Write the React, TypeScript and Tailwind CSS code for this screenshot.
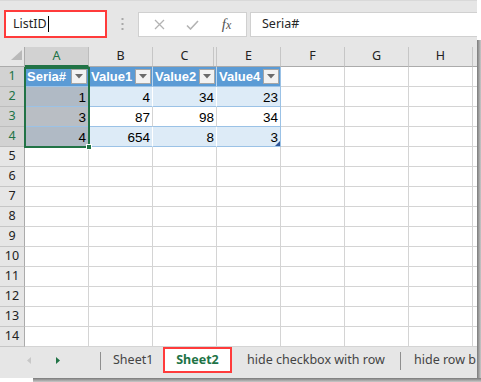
import React from "react";

const COLS = ["A", "B", "C", "E", "F", "G", "H"];

const TABLE: string[][] = [
  ["Seria#", "Value1", "Value2", "Value4"],
  ["1", "4", "34", "23"],
  ["3", "87", "98", "34"],
  ["4", "654", "8", "3"],
];

function DropButton() {
  return (
    <span className="ml-auto mr-px flex h-[15px] w-[16px] shrink-0 items-center justify-center border border-[#a6a6a6] bg-[#f2f2f2]">
      <svg width="8" height="5" viewBox="0 0 8 5">
        <path d="M0 0h8L4 4.5z" fill="#6b6b6b" />
      </svg>
    </span>
  );
}

function TableCell({ row, col }: { row: number; col: number }) {
  const value = TABLE[row][col];
  const last = col === 3;
  if (row === 0) {
    return (
      <div
        className={`flex h-5 w-16 shrink-0 items-center border-b border-[#9bc2e6] bg-[#5b9bd5] pl-[2px] font-['Liberation_Sans',sans-serif] text-[13px] font-bold text-white ${
          last ? "border-r border-r-[#9bc2e6]" : "border-r border-r-white/60"
        }`}
      >
        <span className="leading-none">{value}</span>
        <DropButton />
      </div>
    );
  }
  const selected = col === 0;
  const banded = row % 2 === 1;
  const bg = selected
    ? banded
      ? "bg-[#b0bac5]"
      : "bg-[#b9bec4]"
    : banded
      ? "bg-[#ddebf7]"
      : "bg-white";
  return (
    <div
      className={`relative flex h-5 w-16 shrink-0 items-end justify-end border-b border-[#9bc2e6] pb-[2px] pr-[2px] font-['Liberation_Sans',sans-serif] text-[13.5px] leading-none text-black ${bg} ${
        last ? "border-r border-r-[#9bc2e6]" : banded ? "border-r border-r-white" : "border-r border-r-[#d4d4d4]"
      }`}
    >
      {value}
      {last && row === 3 && (
        <svg className="absolute bottom-0 right-0" width="5" height="5" viewBox="0 0 5 5">
          <path d="M5 0V5H0z" fill="#2f5597" />
        </svg>
      )}
    </div>
  );
}

function RowHeader({ n }: { n: number }) {
  const sel = n <= 4;
  return (
    <div
      className={`flex h-5 w-[25px] shrink-0 items-center justify-center border-b border-r text-[12.5px] ${
        sel
          ? "border-b-[#bdbdbd] border-r-[#217346] bg-[#d2d2d2] text-[#217346]"
          : "border-b-[#c6c6c6] border-r-[#ababab] bg-[#e6e6e6] text-[#222]"
      }`}
    >
      {n}
    </div>
  );
}

function GridRow({ n }: { n: number }) {
  const inTable = n <= 4;
  return (
    <div className="flex">
      <RowHeader n={n} />
      {COLS.map((c, i) =>
        inTable && i < 4 ? (
          <TableCell key={c} row={n - 1} col={i} />
        ) : (
          <div key={c} className="h-5 w-16 shrink-0 border-b border-r border-[#d4d4d4] bg-white" />
        ),
      )}
      <div className="h-5 flex-1 border-b border-[#d4d4d4] bg-white" />
    </div>
  );
}

function ColumnHeaders() {
  return (
    <div className="flex h-5">
      <div className="flex w-[25px] shrink-0 items-end justify-end border-b border-r border-[#ababab] bg-[#e6e6e6] pb-[6px] pr-[2px]">
        <svg width="11" height="10" viewBox="0 0 11 10">
          <path d="M11 0V10H0z" fill="#b9b9b9" />
        </svg>
      </div>
      {COLS.map((c) => (
        <div
          key={c}
          className={`relative flex w-16 shrink-0 items-center justify-center border-r text-[12.5px] ${
            c === "A"
              ? "border-b-2 border-b-[#217346] border-r-[#bdbdbd] bg-[#d2d2d2] text-[#217346]"
              : "border-b border-b-[#ababab] border-r-[#c6c6c6] bg-[#e6e6e6] text-[#222]"
          }`}
        >
          {c}
          {c === "C" && <span className="absolute right-[2px] top-0 h-full w-px bg-[#c6c6c6]" />}
        </div>
      ))}
      <div className="flex-1 border-b border-[#ababab] bg-[#e6e6e6]" />
    </div>
  );
}

function FormulaBar() {
  return (
    <div className="flex h-[47px] items-start border-t border-[#d9d9d9] bg-[#e6e6e6] pl-[4px] pt-[9px]">
      <div className="flex h-[28px] w-[103px] shrink-0 items-center border-2 border-[#ff3b3b] bg-white pl-[7px] text-[12.5px] text-[#262626]">
        ListID
        <span className="ml-px h-[16px] w-px bg-black" />
      </div>
      <div className="flex h-[28px] w-[31px] shrink-0 items-center justify-center">
        <svg width="3" height="12" viewBox="0 0 3 12">
          <rect x="0.5" y="0" width="2" height="2" fill="#a8a8a8" />
          <rect x="0.5" y="5" width="2" height="2" fill="#a8a8a8" />
          <rect x="0.5" y="10" width="2" height="2" fill="#a8a8a8" />
        </svg>
      </div>
      <div className="mt-[2px] flex h-[25px] w-[109px] shrink-0 items-center border border-[#d0d0d0] bg-white">
        <span className="flex w-[36px] justify-center pl-[4px]">
          <svg width="11" height="11" viewBox="0 0 11 11">
            <path d="M1 1L10 10M10 1L1 10" stroke="#b3b3b3" strokeWidth="1.3" />
          </svg>
        </span>
        <span className="flex w-[34px] justify-center">
          <svg width="13" height="10" viewBox="0 0 13 10">
            <path d="M1 5.5L4.5 9L12 1" stroke="#b3b3b3" strokeWidth="1.6" fill="none" />
          </svg>
        </span>
        <span className="flex flex-1 justify-center pr-[2px]">
          <span className="font-['Liberation_Serif',serif] text-[15px] italic leading-none text-[#555]">
            f<span className="text-[12px]">x</span>
          </span>
        </span>
      </div>
      <div className="ml-[3px] mt-[2px] flex h-[25px] flex-1 items-center border border-r-0 border-[#d0d0d0] bg-white pl-[11px] text-[12.5px] text-[#262626]">
        Seria#
      </div>
    </div>
  );
}

function SheetTabs() {
  return (
    <div className="flex h-[31px] items-start bg-[#e6e6e6] text-[12.5px] text-[#444]">
      <div className="flex h-[26px] w-[100px] shrink-0 items-center">
        <svg className="ml-[27px]" width="4" height="7" viewBox="0 0 4 7">
          <path d="M4 0V7L0 3.5z" fill="#c8c8c8" />
        </svg>
        <svg className="ml-[25px]" width="4" height="7" viewBox="0 0 4 7">
          <path d="M0 0V7L4 3.5z" fill="#217346" />
        </svg>
      </div>
      <span className="mt-[5px] h-[18px] w-px bg-[#8f8f8f]" />
      <div className="flex h-[26px] w-[62px] shrink-0 items-center pl-[12px]">Sheet1</div>
      <div className="flex h-[26px] w-[69px] shrink-0 items-center justify-center border-2 border-[#ff3b3b] bg-white font-bold text-[#217346]">
        Sheet2
      </div>
      <div className="flex h-[26px] w-[168px] shrink-0 items-center pl-[15px]">hide checkbox with row</div>
      <span className="mt-[5px] h-[18px] w-px shrink-0 bg-[#8f8f8f]" />
      <div className="flex h-[26px] min-w-0 flex-1 items-center overflow-hidden whitespace-nowrap pl-[13px]">hide row b</div>
    </div>
  );
}

export default function App() {
  return (
    <div className="h-[382px] w-[481px] overflow-hidden bg-white font-['Noto_Sans',sans-serif]">
      <div className="flex">
        <div className="flex h-[378px] w-[477px] shrink-0 flex-col overflow-hidden">
          <FormulaBar />
          <ColumnHeaders />
          <div className="relative">
            {Array.from({ length: 14 }, (_, i) => (
              <GridRow key={i} n={i + 1} />
            ))}
            {/* selection A1:A4 */}
            <div className="pointer-events-none absolute left-[24px] top-0 h-[81px] w-[66px] border-2 border-[#217346]" />
            <div className="pointer-events-none absolute left-[86px] top-[77px] h-[6px] w-[6px] border border-white bg-[#217346]" />
          </div>
          <SheetTabs />
        </div>
        <div className="flex w-[4px] flex-col">
          <div className="h-[40px] bg-white" />
          <div className="h-[338px] bg-gradient-to-r from-[#7a7a7a] to-[#c9c9c9]" />
        </div>
      </div>
      <div className="flex h-[4px]">
        <div className="w-[33px] bg-white" />
        <div className="flex-1 bg-gradient-to-b from-[#7a7a7a] to-[#c9c9c9]" />
      </div>
    </div>
  );
}
